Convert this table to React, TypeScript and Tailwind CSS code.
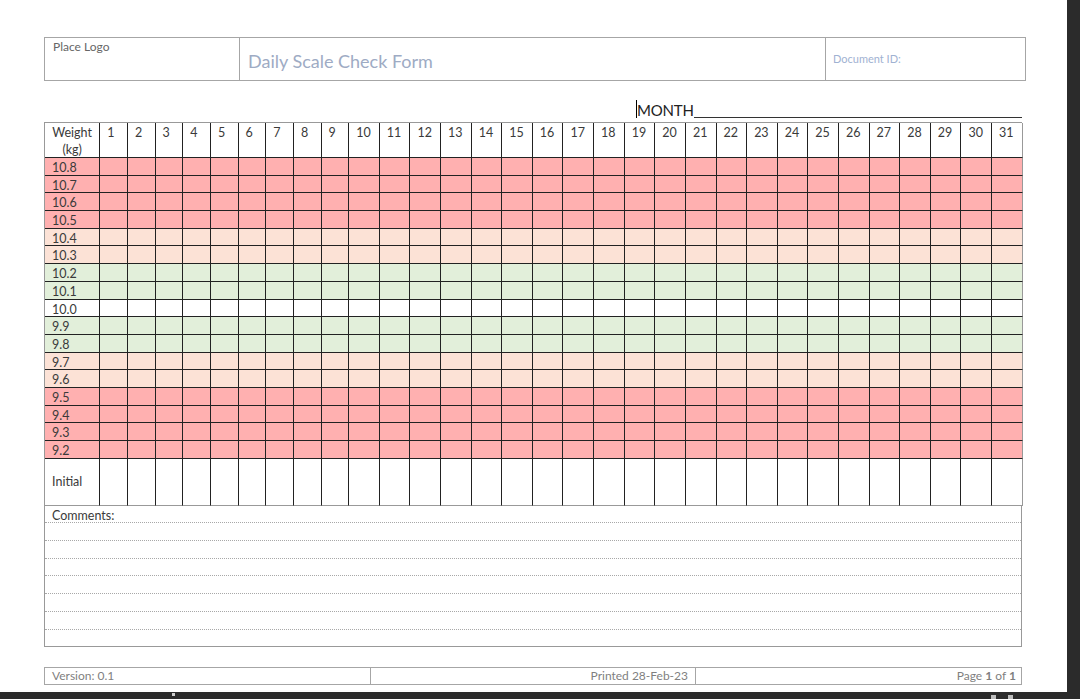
import React from "react";

const rows: { label: string; color: string }[] = [
  { label: "10.8", color: "bg-[#ffb0b0]" },
  { label: "10.7", color: "bg-[#ffb0b0]" },
  { label: "10.6", color: "bg-[#ffb0b0]" },
  { label: "10.5", color: "bg-[#ffb0b0]" },
  { label: "10.4", color: "bg-[#fce2d6]" },
  { label: "10.3", color: "bg-[#fce2d6]" },
  { label: "10.2", color: "bg-[#e2efda]" },
  { label: "10.1", color: "bg-[#e2efda]" },
  { label: "10.0", color: "bg-white" },
  { label: "9.9", color: "bg-[#e2efda]" },
  { label: "9.8", color: "bg-[#e2efda]" },
  { label: "9.7", color: "bg-[#fce2d6]" },
  { label: "9.6", color: "bg-[#fce2d6]" },
  { label: "9.5", color: "bg-[#ffb0b0]" },
  { label: "9.4", color: "bg-[#ffb0b0]" },
  { label: "9.3", color: "bg-[#ffb0b0]" },
  { label: "9.2", color: "bg-[#ffb0b0]" },
];

const days = Array.from({ length: 31 }, (_, i) => i + 1);

export default function App() {
  return (
    <div className="w-[1080px] h-[699px] bg-[#2b2b2b] flex flex-col font-['Lato',sans-serif] overflow-hidden">
      <div className="flex h-[692px]">
        <div className="w-[1067px] h-[692px] bg-white pl-[44px] pt-[37px]">
          {/* Header box */}
          <div className="flex w-[982px] h-[44px] border border-[#a6a6a6]">
            <div className="w-[195px] border-r border-[#a6a6a6] pl-[8px] pt-[1px] text-[12px] leading-[16px] text-[#666]">
              Place Logo
            </div>
            <div className="w-[586px] border-r border-[#a6a6a6] pl-[8px] pt-[4px] flex items-center text-[18px] text-[#9eabc4]">
              Daily Scale Check Form
            </div>
            <div className="flex-1 pl-[7px] flex items-center text-[11px] text-[#9fb2d2]">
              Document ID:
            </div>
          </div>

          {/* Month */}
          <div className="mt-[19px] ml-[592px] w-[386px] h-[19px] flex items-end">
            <div className="w-px h-[18px] bg-black mb-[1px]" />
            <div className="text-[15px] leading-[18px] text-[#222] tracking-[-0.2px]">MONTH</div>
            <div className="flex-1 border-b border-[#333] mb-[1px]" />
          </div>

          {/* Table */}
          <div className="mt-[3px] w-[978px] grid grid-cols-[55.3px_repeat(9,27.67px)_repeat(22,30.62px)] grid-rows-[35px_repeat(17,17.7px)_47px] border-l border-t border-[#999] text-[#3a3a3a] text-[12.5px]">
            <div className="border-r border-b border-[#222] text-center leading-[17px] pt-[1px]">
              Weight
              <br />
              (kg)
            </div>
            {days.map((d) => (
              <div
                key={"h" + d}
                className={
                  "border-b border-[#222] pl-[7px] pt-[1px] leading-[17px] " +
                  (d === 31 ? "border-r border-r-[#999]" : "border-r")
                }
              >
                {d}
              </div>
            ))}
            {rows.map((r) => (
              <React.Fragment key={r.label}>
                <div className={"border-r border-b border-[#222] pl-[7px] pt-[3px] leading-[14px] " + r.color}>
                  {r.label}
                </div>
                {days.map((d) => (
                  <div
                    key={r.label + d}
                    className={
                      "border-b border-[#222] " +
                      r.color +
                      (d === 31 ? " border-r border-r-[#999]" : " border-r")
                    }
                  />
                ))}
              </React.Fragment>
            ))}
            <div className="border-r border-b border-[#222] border-b-[#999] pl-[7px] pt-[1px] flex items-center">
              Initial
            </div>
            {days.map((d) => (
              <div
                key={"i" + d}
                className={
                  "border-b border-[#222] border-b-[#999] " +
                  (d === 31 ? "border-r border-r-[#999]" : "border-r")
                }
              />
            ))}
          </div>

          {/* Comments */}
          <div className="w-[978px] h-[141px] border-x border-b border-[#999] flex flex-col">
            {Array.from({ length: 8 }, (_, i) => (
              <div
                key={i}
                className={
                  "h-[17.7px] shrink-0 " +
                  (i < 7 ? "border-b border-dotted border-[#a8a8a8]" : "")
                }
              >
                {i === 0 && (
                  <div className="pl-[7px] pt-[1px] text-[12.5px] leading-[17px] text-[#3a3a3a]">Comments:</div>
                )}
              </div>
            ))}
          </div>

          {/* Footer */}
          <div className="mt-[20px] w-[978px] h-[18px] flex border border-[#a6a6a6] text-[12px] leading-[16px] text-[#7f7f7f]">
            <div className="w-[326px] border-r border-[#a6a6a6] pl-[7px]">Version: 0.1</div>
            <div className="w-[325px] border-r border-[#a6a6a6] pr-[7px] text-right">Printed 28-Feb-23</div>
            <div className="flex-1 pr-[5px] text-right">
              Page <span className="font-bold">1</span> of <span className="font-bold">1</span>
            </div>
          </div>
        </div>
        <div className="flex-1" />
      </div>
      <div className="h-[7px] relative">
        <div className="absolute left-[172px] top-[1px] w-[3px] h-[3px] bg-[#cfcfcf]" />
        <div className="absolute left-[991px] top-[3px] w-[5px] h-[4px] bg-[#bdbdbd]" />
        <div className="absolute left-[1008px] top-[3px] w-[5px] h-[4px] bg-[#bdbdbd]" />
      </div>
    </div>
  );
}
